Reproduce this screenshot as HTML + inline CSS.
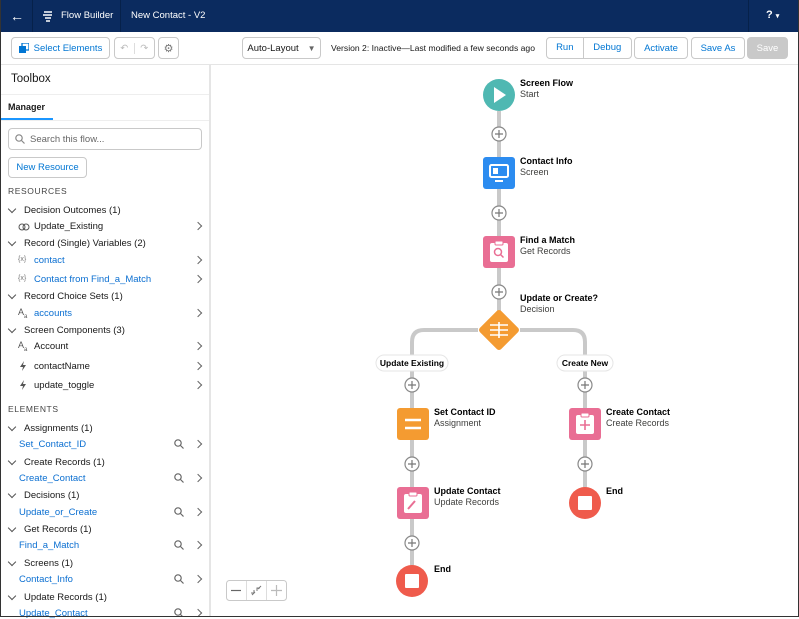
<!DOCTYPE html>
<html><head><meta charset="utf-8"><style>
*{box-sizing:border-box;margin:0;padding:0}
body{width:799px;height:617px;overflow:hidden;position:relative;background:#fff;font-family:"Liberation Sans",sans-serif;color:#181818}
.a{position:absolute;white-space:nowrap}
.hdr{left:0;top:0;width:799px;height:32px;background:#0b2b5f}
.vd{position:absolute;top:0;width:1px;height:32px;background:#06214a}
.btn{position:absolute;border:1px solid #c9c9c9;border-radius:4px;background:#fff;color:#0176d3;font-size:9.5px;display:flex;align-items:center;justify-content:center}
.f{font-size:9.5px}
.lk{color:#0b6fd1}
.chev{position:absolute;left:9px;width:6px;height:6px;border-left:1.2px solid #555;border-bottom:1.2px solid #555;transform:rotate(-45deg)}
.rc{position:absolute;left:195px;width:6px;height:6px;border-right:1.2px solid #666;border-top:1.2px solid #666;transform:rotate(45deg)}
</style></head><body>
<div class="a hdr"></div>
<div class="vd" style="left:32px"></div><div class="vd" style="left:120px"></div><div class="vd" style="left:748px"></div>
<div class="a" style="left:10px;top:8px;color:#fff;font-size:14px;font-weight:bold">&#8592;</div>
<svg class="a" style="left:42px;top:10px" width="12" height="13" viewBox="0 0 12 13"><path d="M2 2h8M1 5h9M3 8h6M4 11h4" stroke="#fff" stroke-width="1.5" fill="none"/></svg>
<div class="a" style="left:61px;top:10px;color:#fff;font-size:9.5px">Flow Builder</div>
<div class="a" style="left:131px;top:10px;color:#fff;font-size:9.5px">New Contact - V2</div>
<div class="a" style="left:766px;top:9px;color:#fff;font-size:11px;font-weight:bold">? <span style="font-size:7px">&#9662;</span></div>
<div class="a" style="left:0;top:64px;width:799px;height:1px;background:#e5e5e5"></div>
<div class="btn" style="left:11px;top:37px;width:99px;height:22px"><svg width="10" height="10" style="margin-right:5px"><rect x="3" y="0" width="7" height="7" fill="none" stroke="#0176d3" stroke-width="1.3"/><rect x="0" y="3" width="7" height="7" fill="#0176d3"/></svg>Select Elements</div>
<div class="btn" style="left:114px;top:37px;width:41px;height:22px;color:#bbb"><span style="width:20px;text-align:center;border-right:1px solid #ddd">&#8630;</span><span style="width:20px;text-align:center">&#8631;</span></div>
<div class="btn" style="left:158px;top:37px;width:21px;height:22px;color:#777;font-size:11px">&#9881;</div>
<div class="btn" style="left:242px;top:37px;width:79px;height:22px;color:#181818">Auto-Layout <span style="color:#666;font-size:8px;margin-left:9px">&#9660;</span></div>
<div class="a" style="left:331px;top:43px;font-size:8.6px">Version 2: Inactive—Last modified a few seconds ago</div>
<div class="btn" style="left:546px;top:37px;width:86px;height:22px;justify-content:flex-start;align-items:stretch"><span style="width:37px;text-align:center;border-right:1px solid #c9c9c9;line-height:20px">Run</span><span style="width:48px;text-align:center;line-height:20px">Debug</span></div>
<div class="btn" style="left:634px;top:37px;width:54px;height:22px">Activate</div>
<div class="btn" style="left:691px;top:37px;width:54px;height:22px">Save As</div>
<div class="btn" style="left:747px;top:37px;width:41px;height:22px;background:#c9c9c9;border-color:#c9c9c9;color:#fff">Save</div>

<div class="a" style="left:209px;top:65px;width:2px;height:552px;background:#e5e5e5"></div>
<div class="a" style="left:11px;top:73px;font-size:11.5px">Toolbox</div>
<div class="a" style="left:0;top:94px;width:209px;height:1px;background:#eee"></div>
<div class="a" style="left:8px;top:102px;font-size:9px;font-weight:bold">Manager</div>
<div class="a" style="left:0;top:118px;width:53px;height:2px;background:#1b96ff"></div>
<div class="a" style="left:0;top:120px;width:209px;height:1px;background:#eee"></div>
<div class="a" style="left:8px;top:128px;width:194px;height:22px;border:1px solid #c9c9c9;border-radius:4px"></div>
<svg class="a" style="left:15px;top:134px" width="10" height="10"><circle cx="4" cy="4" r="3.2" fill="none" stroke="#888" stroke-width="1.2"/><path d="M6.5 6.5L9.5 9.5" stroke="#888" stroke-width="1.2"/></svg>
<div class="a f" style="left:30px;top:134px;color:#666">Search this flow...</div>
<div class="btn" style="left:8px;top:157px;width:79px;height:21px">New Resource</div>
<div class="a" style="left:8px;top:186px;font-size:8.5px;letter-spacing:0.6px;color:#444">RESOURCES</div>
<div class="a" style="left:8px;top:404px;font-size:8.5px;letter-spacing:0.6px;color:#444">ELEMENTS</div>

<div class="chev" style="top:206px"></div><div class="a f" style="left:24px;top:205px">Decision Outcomes (1)</div>
<div class="chev" style="top:239px"></div><div class="a f" style="left:24px;top:238px">Record (Single) Variables (2)</div>
<div class="chev" style="top:292px"></div><div class="a f" style="left:24px;top:291px">Record Choice Sets (1)</div>
<div class="chev" style="top:326px"></div><div class="a f" style="left:24px;top:325px">Screen Components (3)</div>
<div class="chev" style="top:424px"></div><div class="a f" style="left:24px;top:423px">Assignments (1)</div>
<div class="chev" style="top:458px"></div><div class="a f" style="left:24px;top:457px">Create Records (1)</div>
<div class="chev" style="top:491px"></div><div class="a f" style="left:24px;top:490px">Decisions (1)</div>
<div class="chev" style="top:525px"></div><div class="a f" style="left:24px;top:524px">Get Records (1)</div>
<div class="chev" style="top:559px"></div><div class="a f" style="left:24px;top:558px">Screens (1)</div>
<div class="chev" style="top:593px"></div><div class="a f" style="left:24px;top:592px">Update Records (1)</div>
<svg class="a" style="left:18px;top:223px" width="12" height="8"><circle cx="4" cy="4" r="3" fill="none" stroke="#555"/><circle cx="8" cy="4" r="3" fill="none" stroke="#555"/></svg><div class="a f" style="left:34px;top:221px">Update_Existing</div><div class="rc" style="top:223px"></div>
<div class="a" style="left:18px;top:256px;font-size:7px;color:#777">{x}</div><div class="a f lk" style="left:34px;top:255px">contact</div><div class="rc" style="top:257px"></div>
<div class="a" style="left:18px;top:275px;font-size:7px;color:#777">{x}</div><div class="a f lk" style="left:34px;top:274px">Contact from Find_a_Match</div><div class="rc" style="top:276px"></div>
<div class="a" style="left:18px;top:307px;font-size:9px;color:#555">A<sub style="font-size:6px">a</sub></div><div class="a f lk" style="left:34px;top:308px">accounts</div><div class="rc" style="top:310px"></div>
<div class="a" style="left:18px;top:340px;font-size:9px;color:#555">A<sub style="font-size:6px">a</sub></div><div class="a f" style="left:34px;top:341px">Account</div><div class="rc" style="top:343px"></div>
<svg class="a" style="left:19px;top:361px" width="8" height="10"><path d="M5 0L1 6h3l-1 4 4-6H4z" fill="#555"/></svg><div class="a f" style="left:34px;top:361px">contactName</div><div class="rc" style="top:363px"></div>
<svg class="a" style="left:19px;top:380px" width="8" height="10"><path d="M5 0L1 6h3l-1 4 4-6H4z" fill="#555"/></svg><div class="a f" style="left:34px;top:380px">update_toggle</div><div class="rc" style="top:382px"></div>
<div class="a f lk" style="left:19px;top:439px">Set_Contact_ID</div><div class="rc" style="top:441px"></div>
<div class="a f lk" style="left:19px;top:473px">Create_Contact</div><div class="rc" style="top:475px"></div>
<div class="a f lk" style="left:19px;top:507px">Update_or_Create</div><div class="rc" style="top:509px"></div>
<div class="a f lk" style="left:19px;top:540px">Find_a_Match</div><div class="rc" style="top:542px"></div>
<div class="a f lk" style="left:19px;top:574px">Contact_Info</div><div class="rc" style="top:576px"></div>
<div class="a f lk" style="left:19px;top:608px">Update_Contact</div><div class="rc" style="top:610px"></div>
<svg class="a" style="left:0;top:0" width="210" height="617">
<g fill="none" stroke="#666" stroke-width="1.2">
<circle cx="178" cy="443" r="3.2"/><path d="M180.5 445.5l3 3"/>
<circle cx="178" cy="477" r="3.2"/><path d="M180.5 479.5l3 3"/>
<circle cx="178" cy="511" r="3.2"/><path d="M180.5 513.5l3 3"/>
<circle cx="178" cy="544" r="3.2"/><path d="M180.5 546.5l3 3"/>
<circle cx="178" cy="578" r="3.2"/><path d="M180.5 580.5l3 3"/>
<circle cx="178" cy="612" r="3.2"/><path d="M180.5 614.5l3 3"/>
</g></svg>

<svg class="a" style="left:0;top:0" width="799" height="617" font-family="Liberation Sans, sans-serif" font-size="9">
<g stroke="#c9c9c9" stroke-width="4" fill="none">
<path d="M499 111V315"/>
<path d="M478 330H424Q412 330 412 342V568"/>
<path d="M520 330H573Q585 330 585 342V490"/>
</g>
<g fill="#fff" stroke="#888" stroke-width="1.2">
<circle cx="499" cy="134" r="7"/><circle cx="499" cy="213" r="7"/><circle cx="499" cy="292" r="7"/>
<circle cx="412" cy="385" r="7"/><circle cx="412" cy="464" r="7"/><circle cx="412" cy="543" r="7"/>
<circle cx="585" cy="385" r="7"/><circle cx="585" cy="464" r="7"/>
</g>
<g stroke="#777" stroke-width="1.2">
<path d="M495 134h8M499 130v8M495 213h8M499 209v8M495 292h8M499 288v8M408 385h8M412 381v8M408 464h8M412 460v8M408 543h8M412 539v8M581 385h8M585 381v8M581 464h8M585 460v8"/>
</g>
<rect x="376" y="355" width="72" height="16" rx="8" fill="#fff" stroke="#e5e5e5"/>
<text x="412" y="366" text-anchor="middle" font-size="8.5" font-weight="bold">Update Existing</text>
<rect x="557" y="355" width="56" height="16" rx="8" fill="#fff" stroke="#e5e5e5"/>
<text x="585" y="366" text-anchor="middle" font-size="8.5" font-weight="bold">Create New</text>
<circle cx="499" cy="95" r="16" fill="#4fb8b2"/><path d="M494 87L506 95L494 103Z" fill="#fff"/>
<rect x="483" y="157" width="32" height="32" rx="3" fill="#2c8cf0"/>
<rect x="490" y="165" width="18" height="12" rx="1.5" fill="none" stroke="#fff" stroke-width="2"/><rect x="493" y="168" width="5" height="6" fill="#fff"/><path d="M495 181h8" stroke="#fff" stroke-width="2"/>
<rect x="483" y="236" width="32" height="32" rx="3" fill="#e96e94"/>
<rect x="490" y="243" width="18" height="19" rx="2" fill="#fff"/><rect x="495" y="241" width="8" height="4" rx="1" fill="#fff" stroke="#e96e94"/>
<circle cx="498" cy="252" r="3.5" fill="none" stroke="#e96e94" stroke-width="1.5"/><path d="M500.5 254.5l3 3" stroke="#e96e94" stroke-width="1.5"/>
<rect x="484" y="315" width="30" height="30" rx="3" fill="#f49b31" transform="rotate(45 499 330)"/>
<path d="M490 325h18M490 330h18M490 335h18M499 322v16" stroke="#fff" stroke-width="1.6"/>
<rect x="397" y="408" width="32" height="32" rx="3" fill="#f49b31"/>
<path d="M405 420h16M405 428h16" stroke="#fff" stroke-width="2.5"/>
<rect x="569" y="408" width="32" height="32" rx="3" fill="#e96e94"/>
<rect x="576" y="415" width="18" height="19" rx="2" fill="#fff"/><rect x="581" y="413" width="8" height="4" rx="1" fill="#fff" stroke="#e96e94"/>
<path d="M585 420v10M580 425h10" stroke="#e96e94" stroke-width="1.6"/>
<rect x="397" y="487" width="32" height="32" rx="3" fill="#e96e94"/>
<rect x="404" y="494" width="18" height="19" rx="2" fill="#fff"/><rect x="409" y="492" width="8" height="4" rx="1" fill="#fff" stroke="#e96e94"/>
<path d="M408 509l7-8" stroke="#e96e94" stroke-width="2"/>
<circle cx="412" cy="581" r="16" fill="#ef5b4c"/><rect x="405" y="574" width="14" height="14" rx="1" fill="#fff"/>
<circle cx="585" cy="503" r="16" fill="#ef5b4c"/><rect x="578" y="496" width="14" height="14" rx="1" fill="#fff"/>
<g font-weight="bold"><text x="520" y="86">Screen Flow</text><text x="520" y="164">Contact Info</text><text x="520" y="243">Find a Match</text><text x="520" y="301">Update or Create?</text><text x="434" y="415">Set Contact ID</text><text x="606" y="415">Create Contact</text><text x="434" y="494">Update Contact</text><text x="434" y="572">End</text><text x="606" y="494">End</text></g>
<g fill="#3e3e3c"><text x="520" y="97">Start</text><text x="520" y="175">Screen</text><text x="520" y="254">Get Records</text><text x="520" y="312">Decision</text><text x="434" y="426">Assignment</text><text x="606" y="426">Create Records</text><text x="434" y="505">Update Records</text></g>
<rect x="226.5" y="580.5" width="60" height="20" rx="3" fill="#fff" stroke="#c9c9c9"/>
<path d="M246.5 581v19M266.5 581v19" stroke="#ddd"/>
<path d="M231 590.5h10" stroke="#666" stroke-width="1.2"/>
<path d="M276.5 585v11M271 590.5h11" stroke="#bbb" stroke-width="1.2"/>
<path d="M252 595l3-3M261 586l-3 3M254 590v3h-3M257 591v-3h3" stroke="#777" stroke-width="1" fill="none"/>
</svg>
<div class="a" style="left:0;top:0;width:799px;height:617px;border:1px solid #333;border-top:none;pointer-events:none"></div>
</body></html>
